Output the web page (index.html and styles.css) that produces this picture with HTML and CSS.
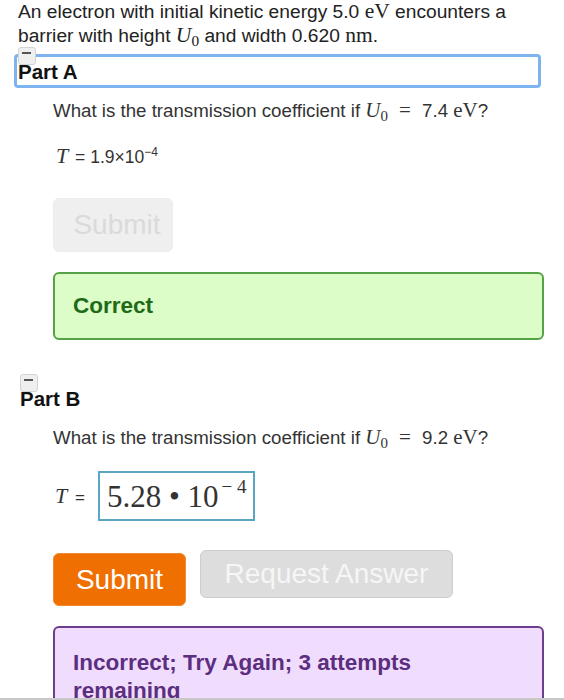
FILE: index.html
```html
<!DOCTYPE html>
<html lang="en">
  <head>
    <meta charset="UTF-8" />
    <title>Transmission coefficient</title>
    <link rel="stylesheet" href="styles.css">
  </head>
  <body>
    <p class="intro">
      An electron with initial kinetic energy 5.0 <span class="m">eV</span> encounters a
      barrier with height <span class="mi">U</span><sub class="msub">0</sub> and width 0.620 <span class="m">nm</span>.
    </p>

    <div class="part">
      <span class="toggle"></span>
      <h2 class="part-head focused">Part A</h2>
      <div class="part-body">
        <p class="question">
          What is the transmission coefficient if <span class="mi">U</span><sub class="msub">0</sub>
          <span class="m eq">=</span> 7.4 <span class="m">eV</span>?
        </p>
        <p class="answer-line">
          <span class="mi">T</span> = 1.9×10<sup>−4</sup>
        </p>
        <button class="btn btn-disabled">Submit</button>
        <div class="feedback correct">Correct</div>
      </div>
    </div>

    <div class="part part-b">
      <span class="toggle"></span>
      <h2 class="part-head">Part B</h2>
      <div class="part-body">
        <p class="question">
          What is the transmission coefficient if <span class="mi">U</span><sub class="msub">0</sub>
          <span class="m eq">=</span> 9.2 <span class="m">eV</span>?
        </p>
        <div class="input-row">
          <span class="label"><span class="mi">T</span> =</span>
          <div class="answer-box">5.28 • 10<sup>− 4</sup></div>
        </div>
        <div class="actions">
          <button class="btn btn-submit">Submit</button>
          <button class="btn btn-request">Request Answer</button>
        </div>
        <div class="feedback incorrect">
          <span>Incorrect; Try Again; 3 attempts remaining</span>
        </div>
      </div>
    </div>

    <div class="bottom-line"></div>
  </body>
</html>
```

FILE: styles.css
```css
body {
  margin: 0;
  padding: 0;
  font-family: "Liberation Sans", Arial, sans-serif;
  color: #222;
  background-color: #ffffff;
}

p {
  margin: 0;
}

.m,
.mi {
  font-family: "Liberation Serif", "Times New Roman", serif;
  font-size: 1.12em;
  line-height: 1;
}
.mi {
  font-style: italic;
}
.msub {
  font-family: "Liberation Serif", "Times New Roman", serif;
  font-size: 0.8em;
  vertical-align: -4px;
  line-height: 0;
}
.eq {
  margin: 0 6px;
}

.intro {
  height: 48px;
  padding: 0 18px;
  font-size: 19.2px;
  line-height: 24px;
}

.part {
  position: relative;
}
.toggle {
  position: absolute;
  left: 18px;
  top: -7px;
  width: 16px;
  height: 16px;
  border: 1px solid #d4d4d4;
  border-radius: 3px;
  background-color: #efefef;
}
.toggle::after {
  content: "";
  position: absolute;
  left: 3px;
  top: 4px;
  width: 9px;
  height: 2px;
  background-color: #555;
}

.part-head {
  margin: 6px 23px 0 14px;
  height: 28px;
  padding-left: 1px;
  border: 3px solid transparent;
  border-radius: 4px;
  font-size: 20.5px;
  line-height: 30px;
  font-weight: bold;
  color: #111;
}
.part-head.focused {
  border-color: #7db4f0;
}

.part-body {
  padding-left: 53px;
  padding-right: 20px;
}

.question {
  height: 24px;
  margin-top: 11px;
  font-size: 18.7px;
  line-height: 24px;
  color: #333;
}

.answer-line {
  height: 24px;
  margin-top: 22px;
  padding-left: 3px;
  font-size: 17.5px;
  line-height: 24px;
  color: #333;
}
.answer-line .mi {
  font-size: 22px;
  margin-right: 2px;
}
.answer-line sup {
  font-size: 12px;
  line-height: 0;
}

.btn {
  font-family: "Liberation Sans", Arial, sans-serif;
  font-size: 28px;
  border-radius: 6px;
  border: 1px solid transparent;
  padding: 0;
  cursor: pointer;
}
.btn-disabled {
  display: block;
  margin-top: 29px;
  width: 120px;
  height: 54px;
  padding-left: 8px;
  background-color: #efefef;
  border-color: #ececec;
  color: #dadada;
}

.feedback {
  width: 491px;
  box-sizing: border-box;
  border: 2px solid;
  border-radius: 6px;
  font-size: 22.5px;
  font-weight: bold;
}
.correct {
  margin-top: 20px;
  height: 68px;
  padding: 0 18px;
  line-height: 64px;
  background-color: #dcfcc8;
  border-color: #56a246;
  color: #1e6a16;
}
.incorrect {
  margin-top: 20px;
  padding: 21px 70px 12px 18px;
  line-height: 28px;
  background-color: #f0dcfc;
  border-color: #6e3e8e;
  color: #5b2e80;
}

.part-b {
  margin-top: 41px;
}
.part-b .part-head {
  padding-left: 3px;
}
.part-b .toggle {
  left: 20px;
  top: -7px;
}

.input-row {
  display: flex;
  align-items: center;
  margin-top: 21px;
}
.label {
  width: 43px;
  padding-left: 2px;
  font-size: 17px;
  color: #333;
}
.label .mi {
  font-size: 22px;
  margin-right: 3px;
}
.answer-box {
  width: 157px;
  height: 50px;
  box-sizing: border-box;
  border: 2px solid #5aa6c2;
  padding-left: 7px;
  font-family: "Liberation Serif", "Times New Roman", serif;
  font-size: 31px;
  line-height: 48px;
  color: #333;
}
.answer-box sup {
  font-size: 19px;
  line-height: 0;
  vertical-align: 14px;
  margin-left: 3px;
}

.actions {
  display: flex;
  align-items: flex-start;
  gap: 14px;
  margin-top: 29px;
}
.btn-submit {
  margin-top: 3px;
  width: 133px;
  height: 53px;
  background-color: #ef6f00;
  border-color: #f08a30;
  color: #fff;
}
.btn-request {
  width: 253px;
  height: 48px;
  background-color: #dddddd;
  border-color: #cdcdcd;
  color: #f6f6f6;
}

.bottom-line {
  position: fixed;
  left: 0;
  right: 0;
  bottom: 0;
  height: 2px;
  background-color: #c8c8c8;
}
```
